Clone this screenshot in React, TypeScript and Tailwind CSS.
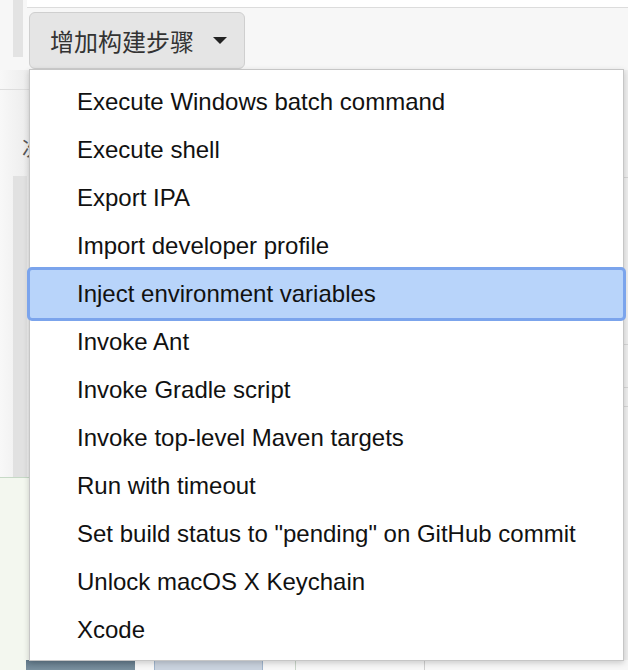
const items = [
  "Execute Windows batch command",
  "Execute shell",
  "Export IPA",
  "Import developer profile",
  "Inject environment variables",
  "Invoke Ant",
  "Invoke Gradle script",
  "Invoke top-level Maven targets",
  "Run with timeout",
  'Set build status to "pending" on GitHub commit',
  "Unlock macOS X Keychain",
  "Xcode",
];

const active = "Inject environment variables";

function MenuItem({ label }: { label: string }) {
  if (label === active) {
    return (
      <div className="relative z-10 -mx-[3px] -my-[3px] flex h-[54px] items-center rounded-[5px] border-[3px] border-[#7ba4ec] bg-[#b8d4fa] pl-[47px] text-[24px] text-[#111]">
        {label}
      </div>
    );
  }
  return (
    <div className="flex h-[48px] items-center pl-[47px] text-[24px] text-[#111]">
      {label}
    </div>
  );
}

export default function App() {
  return (
    <div className="relative h-[670px] w-[628px] overflow-hidden bg-[#f7f7f7] font-['Liberation_Sans',Arial,sans-serif]">
      {/* top row: side bar + panel edge + add step button */}
      <div className="flex h-[70px]">
        <div className="w-[13px]" />
        <div className="h-[57px] w-[10px] bg-[#e3e3e3]" />
        <div className="w-[4px]" />
        <div className="flex-1">
          <div className="h-[8px] border-b border-[#dcdcdc] bg-white" />
          <button className="ml-[2px] mt-[4px] flex h-[57px] w-[216px] items-center rounded-[6px] border border-[#cfcfcf] bg-[#e5e5e5] pl-[20px] font-['Noto_Sans_CJK_SC',sans-serif] text-[24px] text-[#333]">
            增加构建步骤
            <span className="ml-[19px] h-0 w-0 border-x-[7px] border-t-[7px] border-x-transparent border-t-[#222]" />
          </button>
        </div>
      </div>

      {/* body behind the menu */}
      <div className="flex h-[590px]">
        <div className="flex w-[29px] flex-col bg-gradient-to-r from-[#f8f8f8] to-[#ececec]">
          <div className="h-[20px] border-b border-[#dddddd]" />
          <div className="h-[86px] overflow-hidden pl-[22px] pt-[48px] font-['Noto_Sans_CJK_SC',sans-serif] text-[20px] leading-none text-[#555]">
            次
          </div>
          <div className="flex h-[301px] pl-[13px]">
            <div className="w-[14px] bg-[#e1e1e1]" />
          </div>
          <div className="flex-1 border-t border-[#c6d9c6] bg-[#f3f7ef]" />
        </div>
        <div className="flex-1" />
        <div className="flex w-[5px] flex-col bg-[#efefef]">
          <div className="h-[108px] border-b border-[#d6d6d6]" />
          <div className="h-[167px] border-b border-[#d6d6d6]" />
          <div className="h-[43px] border-b border-[#d6d6d6]" />
          <div className="h-[19px] border-b border-[#d6d6d6]" />
        </div>
      </div>

      {/* bottom buttons peeking out */}
      <div className="flex h-[10px]">
        <div className="w-[26px] bg-[#f3f7ef]" />
        <div className="w-[109px] bg-gradient-to-b from-[#62798a] to-[#7a909e]" />
        <div className="w-[19px]" />
        <div className="w-[109px] border-x border-[#9fb4cc] bg-[#c9d2de]" />
        <div className="w-[32px]" />
        <div className="w-[129px] border-l border-[#c8d4c8]" />
        <div className="flex-1 border-l border-[#cfcfcf]" />
      </div>

      {/* dropdown menu */}
      <div className="absolute left-[29px] top-[69px] flex h-[592px] w-[595px] flex-col border border-[#c6c6c6] bg-white pb-[6px] pt-[8px] shadow-[0_2px_6px_rgba(0,0,0,0.18)]">
        {items.map((label) => (
          <MenuItem key={label} label={label} />
        ))}
      </div>
    </div>
  );
}
